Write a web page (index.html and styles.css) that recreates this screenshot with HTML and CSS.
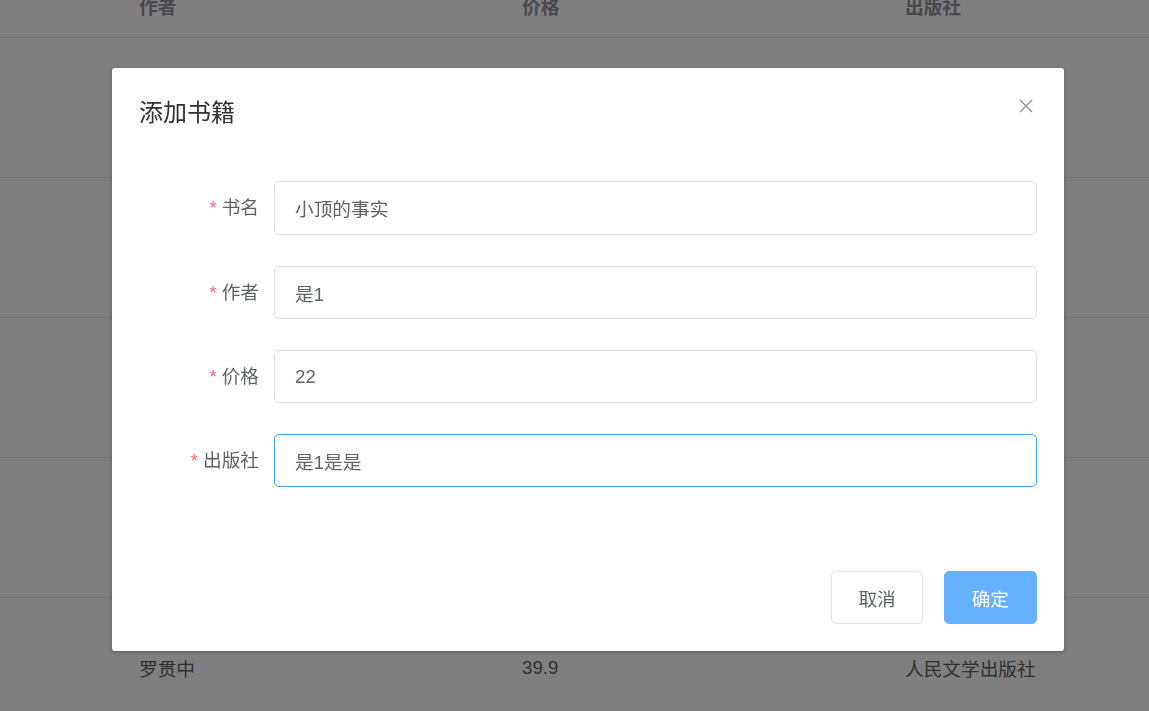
FILE: index.html
```html
<!DOCTYPE html>
<html lang="zh-CN">
<head>
<meta charset="utf-8">
<title>添加书籍</title>
<link rel="stylesheet" href="styles.css">
</head>
<body>
<div class="table">
  <div class="row head">
    <div class="cell">作者</div>
    <div class="cell">价格</div>
    <div class="cell">出版社</div>
  </div>
  <div class="row"><div class="cell"></div><div class="cell"></div><div class="cell"></div></div>
  <div class="row"><div class="cell"></div><div class="cell"></div><div class="cell"></div></div>
  <div class="row"><div class="cell"></div><div class="cell"></div><div class="cell"></div></div>
  <div class="row"><div class="cell"></div><div class="cell"></div><div class="cell"></div></div>
  <div class="row">
    <div class="cell">罗贯中</div>
    <div class="cell">39.9</div>
    <div class="cell">人民文学出版社</div>
  </div>
</div>

<div class="overlay">
  <div class="dialog">
    <div class="dialog-header">
      <span class="dialog-title">添加书籍</span>
      <button class="dialog-close" aria-label="Close">
        <svg width="14" height="14" viewBox="0 0 14 14"><path d="M1 1L13 13M13 1L1 13" stroke="#909399" stroke-width="1.4" fill="none"/></svg>
      </button>
    </div>
    <div class="dialog-body">
      <div class="form-item">
        <label class="form-label"><span class="req">*</span>书名</label>
        <div class="input">小顶的事实</div>
      </div>
      <div class="form-item">
        <label class="form-label"><span class="req">*</span>作者</label>
        <div class="input">是1</div>
      </div>
      <div class="form-item">
        <label class="form-label"><span class="req">*</span>价格</label>
        <div class="input">22</div>
      </div>
      <div class="form-item">
        <label class="form-label"><span class="req">*</span>出版社</label>
        <div class="input focus">是1是是</div>
      </div>
    </div>
    <div class="dialog-footer">
      <button class="btn">取消</button>
      <button class="btn primary">确定</button>
    </div>
  </div>
</div>
</body>
</html>
```

FILE: styles.css
```css
html, body {
  margin: 0;
  padding: 0;
  height: 100%;
  overflow: hidden;
}
body {
  font-family: "Liberation Sans", "Noto Sans CJK SC", sans-serif;
  background: #fff;
  color: #606266;
  font-size: 18.67px;
}
.table {
  margin-top: -26px;
}
.row {
  display: grid;
  grid-template-columns: 383px 383px 383px;
  height: 140px;
  border-bottom: 1px solid #ebeef5;
  box-sizing: border-box;
}
.row.head {
  height: 64px;
}
.cell {
  padding-left: 139px;
  display: flex;
  align-items: center;
  white-space: nowrap;
  color: #606266;
}
.row.head .cell {
  color: #909399;
  font-weight: bold;
}
.overlay {
  position: fixed;
  inset: 0;
  background: rgba(0, 0, 0, 0.5);
  display: flex;
  align-items: flex-start;
}
.dialog {
  position: relative;
  margin: 68px 0 0 112px;
  width: 952px;
  background: #fff;
  border-radius: 3px;
  box-shadow: 0 1px 4px rgba(0, 0, 0, 0.3);
}
.dialog-header {
  padding: 29px 27px 12.3px;
}
.dialog-title {
  display: block;
  font-size: 24px;
  line-height: 32px;
  color: #303133;
}
.dialog-close {
  position: absolute;
  top: 31px;
  right: 31px;
  width: 14px;
  height: 14px;
  padding: 0;
  border: 0;
  background: transparent;
  display: flex;
}
.dialog-body {
  padding: 40px 27px 70px;
  display: flex;
  flex-direction: column;
  gap: 31px;
}
.form-item {
  display: flex;
  align-items: center;
}
.form-label {
  width: 135px;
  box-sizing: border-box;
  padding-right: 15px;
  text-align: right;
  line-height: 53.3px;
  color: #606266;
}
.req {
  color: #f56c6c;
  margin-right: 5px;
}
.input {
  flex: 1;
  height: 53.3px;
  box-sizing: border-box;
  border: 1px solid #dcdfe6;
  border-radius: 5px;
  padding: 0 20px;
  display: flex;
  align-items: center;
  color: #606266;
}
.input.focus {
  border-color: #409eff;
}
.dialog-footer {
  padding: 13.3px 27px 27px;
  display: flex;
  justify-content: flex-end;
  gap: 21px;
}
.btn {
  height: 53.3px;
  padding: 0 26px;
  border: 1px solid #dcdfe6;
  border-radius: 5px;
  background: #fff;
  color: #606266;
  font-family: inherit;
  font-size: 18.67px;
}
.btn.primary {
  background: #66b1ff;
  border-color: #66b1ff;
  color: #fff;
  padding: 0 27px;
}
```
